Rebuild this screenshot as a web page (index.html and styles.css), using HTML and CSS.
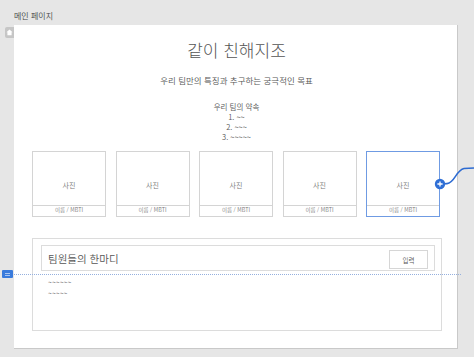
FILE: index.html
```html
<!DOCTYPE html>
<html lang="ko">
<head>
    <meta charset="UTF-8">
    <meta name="viewport" content="width=device-width, initial-scale=1.0">
    <title>메인 페이지</title>
    <link rel="stylesheet" href="styles.css">
</head>
<body>
    <div class="page-label">메인 페이지</div>

    <div class="frame">
        <!-- 왼쪽 홈 탭 -->
        <div class="home-tab">
            <svg width="7" height="7" viewBox="0 0 7 7">
                <path d="M3.5 0.5 L6.5 3.2 L5.6 3.2 L5.6 6.2 L1.4 6.2 L1.4 3.2 L0.5 3.2 Z" fill="#ffffff"/>
            </svg>
        </div>

        <h1 class="title">같이 친해지조</h1>
        <p class="subtitle">우리 팀만의 특징과 추구하는 궁극적인 목표</p>

        <div class="promise">
            <div>우리 팀의 약속</div>
            <div>1. ~~</div>
            <div>2. ~~~</div>
            <div>3. ~~~~~</div>
        </div>

        <!-- 팀원 카드 -->
        <div class="cards">
            <div class="card">
                <div class="photo">사진</div>
                <div class="name">이름 / MBTI</div>
            </div>
            <div class="card">
                <div class="photo">사진</div>
                <div class="name">이름 / MBTI</div>
            </div>
            <div class="card">
                <div class="photo">사진</div>
                <div class="name">이름 / MBTI</div>
            </div>
            <div class="card">
                <div class="photo">사진</div>
                <div class="name">이름 / MBTI</div>
            </div>
            <div class="card selected">
                <div class="photo">사진</div>
                <div class="name">이름 / MBTI</div>
            </div>
        </div>

        <!-- 한마디 -->
        <div class="comments">
            <div class="comment-head">
                <span>팀원들의 한마디</span>
                <button class="btn-input">입력</button>
            </div>
            <div class="comment-list">
                <div>~~~~~~</div>
                <div>~~~~~</div>
            </div>
        </div>
    </div>

    <!-- 가이드 라인 -->
    <div class="guide-line"></div>
    <div class="guide-marker"></div>

    <!-- 연결선 -->
    <svg class="connector" width="44" height="36" viewBox="430 160 44 36">
        <path d="M440 184 L447 183.6 C455 183 456 170 464 168.5 L474 168" fill="none" stroke="#2d6bd2" stroke-width="1.6"/>
        <circle cx="440" cy="184" r="5.2" fill="#2f6fd6"/>
        <path d="M437.4 184 H442.6 M440 181.4 V186.6" stroke="#ffffff" stroke-width="1.3"/>
    </svg>
</body>
</html>
```

FILE: styles.css
```css
body {
    margin: 0;
    font-family: "Noto Sans CJK KR", "Noto Sans", sans-serif;
    font-weight: 350;
    background-color: #e6e6e6;
    width: 474px;
    height: 357px;
    overflow: hidden;
    position: relative;
}

.page-label {
    height: 25px;
    padding-left: 14px;
    box-sizing: border-box;
    padding-top: 10px;
    font-size: 8px;
    line-height: 12px;
    color: #444;
}

.frame {
    position: relative;
    margin-left: 14px;
    width: 444px;
    height: 324px;
    box-sizing: border-box;
    background: white;
    border-right: 1px solid #c9c9c9;
    border-bottom: 1px solid #c9c9c9;
    padding: 15px 16px 0 18px;
    color: #555;
}

.home-tab {
    position: absolute;
    left: -9px;
    top: 2px;
    width: 9px;
    height: 11px;
    background: #c6c6c6;
    border-radius: 2px 0 0 2px;
    display: flex;
    align-items: center;
    justify-content: center;
}

.title {
    margin: 0;
    text-align: center;
    font-size: 17px;
    line-height: 20px;
    font-weight: 300;
    color: #555;
}

.subtitle {
    margin: 14px 0 0;
    text-align: center;
    font-size: 8.5px;
    line-height: 12px;
    color: #555;
}

.promise {
    margin-top: 16px;
    text-align: center;
    font-size: 7.5px;
    line-height: 10px;
    color: #555;
}

.cards {
    margin-top: 9px;
    width: 408px;
    display: flex;
    justify-content: space-between;
}

.card {
    width: 74px;
    height: 66px;
    box-sizing: border-box;
    border: 1px solid #d4d4d4;
    display: flex;
    flex-direction: column;
}

.card.selected {
    border-color: #6f9be3;
}

.photo {
    flex: 1;
    text-align: center;
    font-size: 7px;
    line-height: 10px;
    padding-top: 28px;
    color: #777;
}

.name {
    height: 10px;
    border-top: 1px solid #d4d4d4;
    text-align: center;
    font-size: 5.5px;
    line-height: 9px;
    color: #777;
}

.comments {
    margin-top: 21px;
    width: 410px;
    height: 93px;
    box-sizing: border-box;
    border: 1px solid #dcdcdc;
    padding: 6px 6px 0 8px;
}

.comment-head {
    height: 26px;
    box-sizing: border-box;
    border: 1px solid #dcdcdc;
    display: flex;
    align-items: center;
    justify-content: space-between;
    padding: 0 6px 0 6px;
    font-size: 10.5px;
    color: #555;
}

.btn-input {
    width: 39px;
    height: 19px;
    margin-top: 3px;
    padding: 0;
    background: white;
    border: 1px solid #d6d6d6;
    font-family: inherit;
    font-weight: 350;
    font-size: 6.5px;
    color: #555;
}

.comment-list {
    padding: 6px 0 0 7px;
    font-size: 7px;
    line-height: 11px;
    font-weight: 400;
    color: #777;
}

.guide-line {
    position: absolute;
    left: 14px;
    top: 274px;
    width: 447px;
    border-top: 1px dotted #95b0de;
}

.guide-marker {
    position: absolute;
    left: 2px;
    top: 270px;
    width: 11px;
    height: 8px;
    background: #3a7bdc;
    border-radius: 1px;
}

.guide-marker::after {
    content: "";
    position: absolute;
    left: 3px;
    top: 3px;
    width: 5px;
    height: 1px;
    border-top: 1px solid #a9c6f2;
    border-bottom: 1px solid #a9c6f2;
}

.connector {
    position: absolute;
    left: 430px;
    top: 160px;
}
```
